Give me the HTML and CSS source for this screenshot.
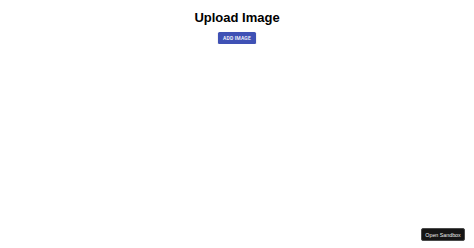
FILE: index.html
```html
<!DOCTYPE html>
<html lang="en">
<head>
<meta charset="utf-8">
<title>Upload Image</title>
<link rel="stylesheet" href="styles.css">
</head>
<body>
<div class="app">
  <h1 class="title">Upload Image</h1>
  <button class="add-btn" type="button">Add Image</button>
</div>
<a class="sandbox-btn" href="#">Open Sandbox</a>
</body>
</html>
```
FILE: styles.css
```css
html, body {
  margin: 0;
  padding: 0;
  background: #ffffff;
}
body {
  font-family: "Liberation Sans", Arial, sans-serif;
}
.app {
  display: flex;
  flex-direction: column;
  align-items: center;
}
.title {
  margin: 10px 0 0;
  font-size: 13px;
  line-height: 15px;
  font-weight: 700;
  color: #000;
}
.add-btn {
  margin-top: 7px;
  width: 38px;
  height: 12px;
  padding: 0;
  border: none;
  border-radius: 1.5px;
  background: #3f51b5;
  color: #fff;
  font-family: Roboto, "Liberation Sans", sans-serif;
  font-weight: 500;
  font-size: 5px;
  letter-spacing: 0.15px;
  text-transform: uppercase;
  box-shadow: 0 1px 1.5px rgba(0,0,0,0.25);
}
.sandbox-btn {
  position: fixed;
  right: 9px;
  bottom: 7px;
  width: 44px;
  height: 13px;
  box-sizing: border-box;
  display: flex;
  align-items: center;
  justify-content: center;
  background: #151515;
  border: 0.5px solid #4a4a4a;
  border-radius: 2px;
  color: #f0f0f0;
  font-size: 5.3px;
  text-decoration: none;
}
```
